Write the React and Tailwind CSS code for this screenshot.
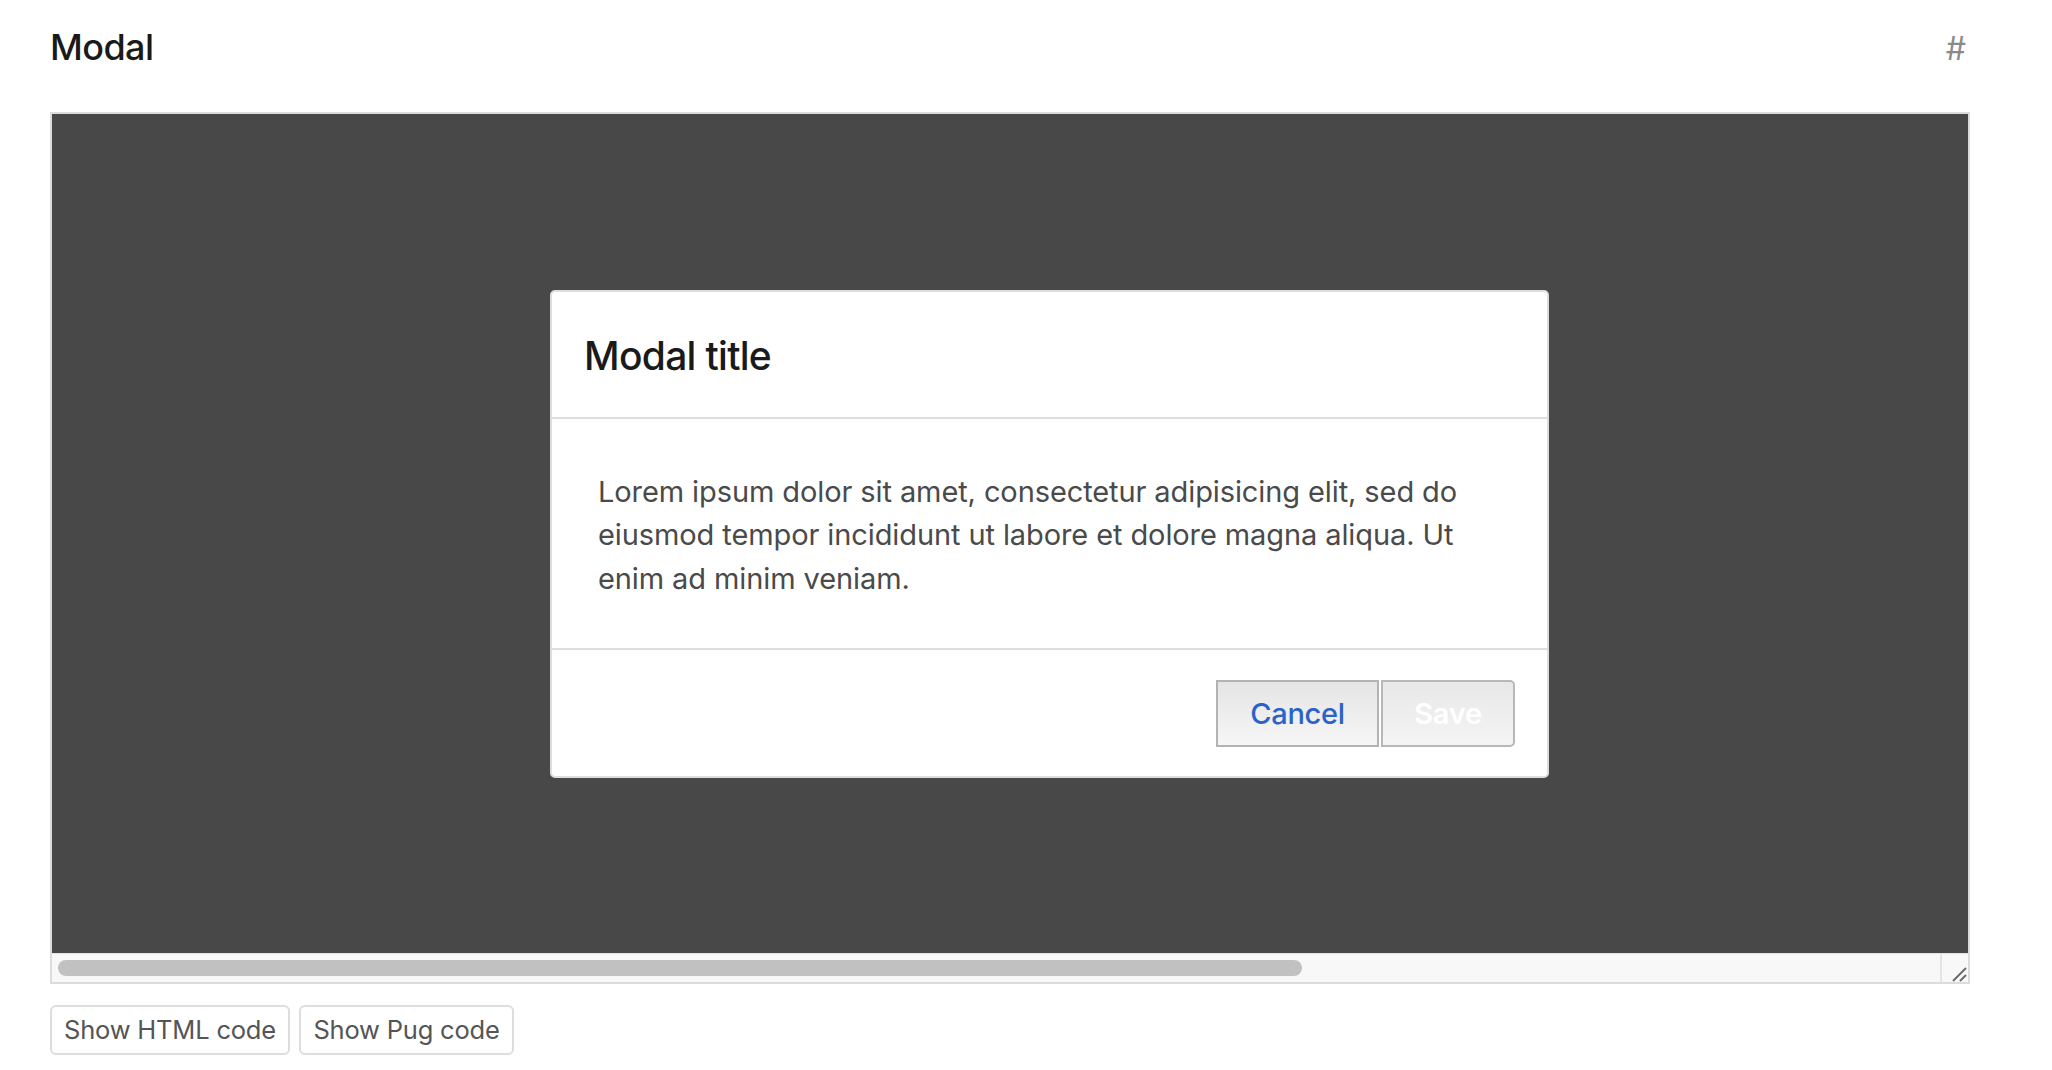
export default function App() {
  const font = { fontFamily: 'Inter, "Noto Sans", sans-serif' };
  return (
    <div className="w-[2052px] h-[1070px] bg-white overflow-hidden" style={font}>
      <div className="pl-[50px] pr-[82px]">
        <div className="h-[112px] flex justify-between items-start pt-[24px]">
          <h2 className="text-[36px] leading-[46px] font-medium text-[#1a1a1a] tracking-[-0.6px]">Modal</h2>
          <span className="text-[32px] leading-[46px] text-[#8a8a8a] pr-[4px] mt-[2px]">#</span>
        </div>
        <div className="w-[1920px] border-2 border-[#dcdcdc]">
          <div className="h-[839px] bg-[#484848] flex items-center pl-[498px]">
            <div className="w-[999px] mt-[1px] bg-white border-2 border-[#dddddd] rounded-[5px]">
              <div className="h-[127px] flex items-center px-[32px] border-b-2 border-[#dddddd]">
                <h3 className="text-[39px] font-medium text-[#1a1a1a] tracking-[-0.7px] leading-none mt-[2px]">Modal title</h3>
              </div>
              <div className="pt-[51px] pb-[48px] pl-[46px] pr-[48px] border-b-2 border-[#dddddd]">
                <p className="text-[29px] leading-[43.5px] text-[#4a4a4a] tracking-[-0.1px] max-w-[900px]">
                  Lorem ipsum dolor sit amet, consectetur adipisicing elit, sed do eiusmod tempor incididunt ut labore et dolore magna aliqua. Ut enim ad minim veniam.
                </p>
              </div>
              <div className="h-[126px] flex items-center justify-end pr-[32px] gap-[2px]">
                <button className="w-[163px] h-[67px] border-2 border-[#b3b3b3] bg-gradient-to-b from-[#e5e5e5] to-[#f6f6f6] text-[#2a62c8] text-[29px] font-medium tracking-[-0.3px]" style={font}>Cancel</button>
                <button className="w-[134px] h-[67px] border-2 border-[#b8b8b8] rounded-r-[5px] bg-gradient-to-b from-[#e8e8e8] to-[#f4f4f4] text-white text-[29px] font-semibold tracking-[-0.3px]" style={font}>Save</button>
              </div>
            </div>
          </div>
          <div className="h-[29px] bg-[#f8f8f8] border-t border-[#e2e2e2] flex">
            <div className="flex-1 flex items-center pl-[6px]">
              <div className="w-[1244px] h-[16px] rounded-full bg-[#c1c1c1]"></div>
            </div>
            <div className="w-[28px] border-l-2 border-[#e4e4e4] relative">
              <svg width="26" height="28" viewBox="0 0 26 28" className="absolute left-0 top-0">
                <line x1="11" y1="27" x2="24" y2="14" stroke="#6b6b6b" strokeWidth="2" />
                <line x1="18" y1="27" x2="24" y2="21" stroke="#6b6b6b" strokeWidth="2" />
              </svg>
            </div>
          </div>
        </div>
        <div className="flex gap-[9px] mt-[21px]">
          <button className="h-[50px] w-[240px] border-2 border-[#dddddd] rounded-[6px] text-[25.5px] tracking-[-0.2px] text-[#555555] bg-white" style={font}>Show HTML code</button>
          <button className="h-[50px] w-[215px] border-2 border-[#dddddd] rounded-[6px] text-[25.5px] tracking-[-0.2px] text-[#555555] bg-white" style={font}>Show Pug code</button>
        </div>
      </div>
    </div>
  );
}
